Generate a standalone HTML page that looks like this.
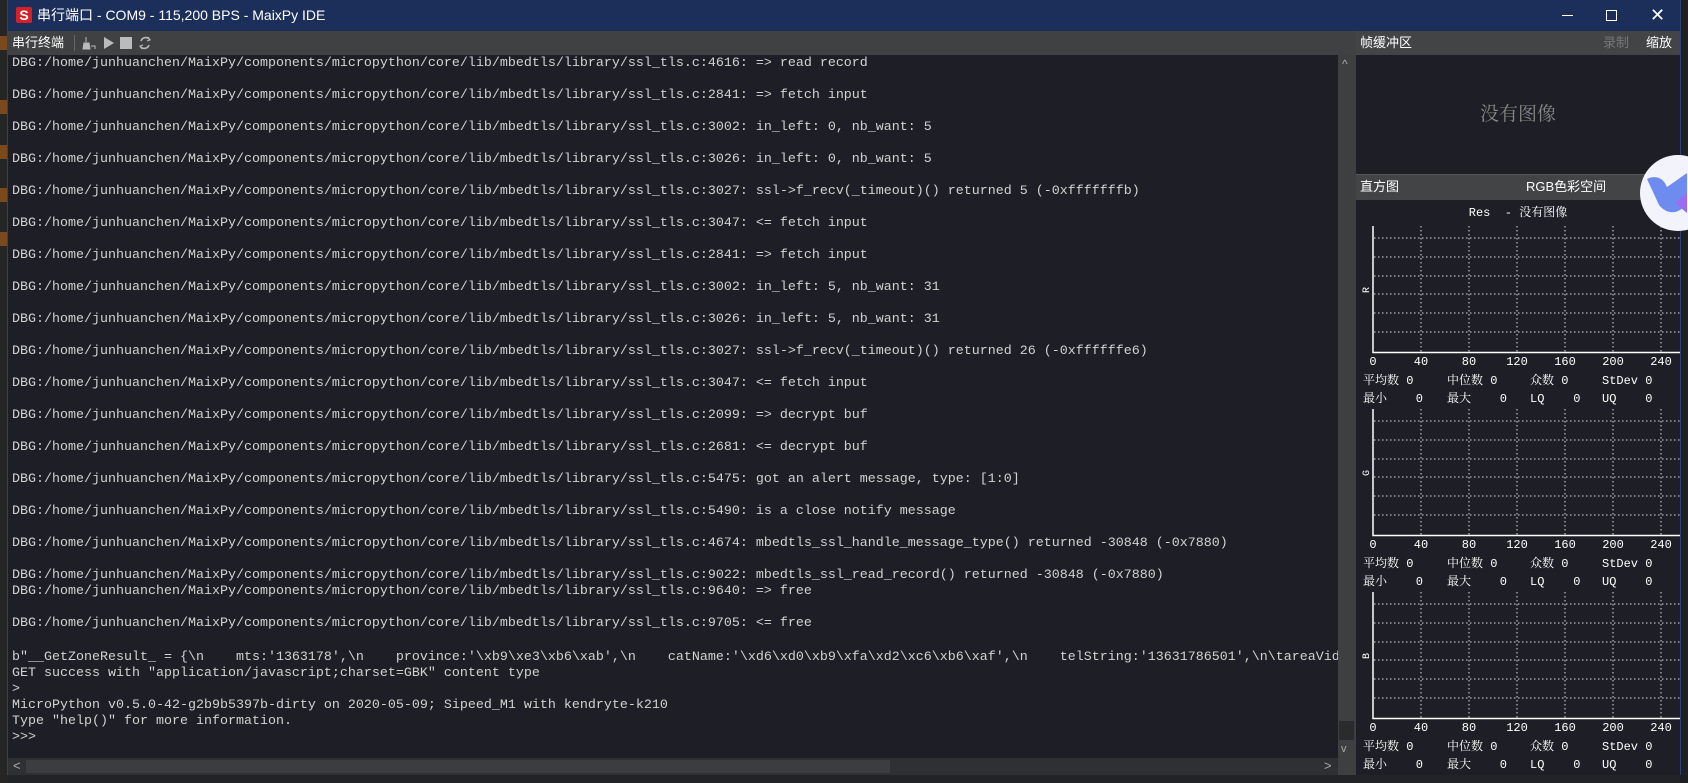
<!DOCTYPE html>
<html><head><meta charset="utf-8"><style>
*{margin:0;padding:0;box-sizing:border-box}
body{width:1688px;height:783px;background:#1b1c20;position:relative;overflow:hidden;font-family:"Liberation Sans","Noto Sans CJK SC",sans-serif}
.abs{position:absolute}
#title{left:8px;top:0;width:1672px;height:31px;background:#1b2f5a;color:#fff;font-size:14px}
#tb{left:8px;top:31px;width:1348px;height:24px;background:#404142;color:#fff;font-size:13px}
#term{left:8px;top:55px;width:1330px;height:703px;background:#1e1f26;overflow:hidden}
pre{font-family:"Liberation Mono",monospace;font-size:13.33px;line-height:16px;color:#d2d2d2;padding-left:4px;white-space:pre}
#vs{left:1338px;top:55px;width:18px;height:720px;background:#3e3f40}
#hs{left:8px;top:758px;width:1330px;height:17px;background:#2f3033}
#rp{left:1356px;top:31px;width:324px;height:744px;background:#1e1f26}
.hdr{background:#434445;color:#fff;font-size:13px;height:24px;line-height:24px}
.st{font-family:"Liberation Mono","Noto Serif CJK SC",monospace;font-size:12px;color:#fff;position:absolute}
</style></head><body>
<div class="abs" style="left:0;top:0;width:8px;height:783px;background:#252526"></div>
<div class="abs" style="left:0;top:36px;width:7px;height:14px;background:#7a4a1c"></div>
<div class="abs" style="left:0;top:100px;width:7px;height:14px;background:#7a4a1c"></div>
<div class="abs" style="left:0;top:145px;width:7px;height:14px;background:#7a4a1c"></div>
<div class="abs" style="left:0;top:188px;width:7px;height:14px;background:#7a4a1c"></div>
<div class="abs" style="left:0;top:232px;width:7px;height:14px;background:#7a4a1c"></div>
<div class="abs" style="left:1680px;top:0;width:8px;height:783px;background:#1e1f22"></div>

<div id="title" class="abs">
 <div class="abs" style="left:8px;top:7px;width:16px;height:16px;background:#d42027;border-radius:2px;color:#fff;font-weight:bold;font-size:14px;line-height:16px;text-align:center">S</div>
 <div class="abs" style="left:29px;top:7px;line-height:17px">串行端口 - COM9 - 115,200 BPS - MaixPy IDE</div>
 <div class="abs" style="left:1554px;top:15px;width:11px;height:1px;background:#fff"></div>
 <div class="abs" style="left:1598px;top:10px;width:11px;height:11px;border:1px solid #fff"></div>
 <div class="abs" style="left:1642px;top:4px;font-size:18px;line-height:22px">✕</div>
</div>

<div id="tb" class="abs">
 <div class="abs" style="left:4px;top:3px;line-height:18px">串行终端</div>
 <div class="abs" style="left:66px;top:4px;width:1px;height:16px;background:#666"></div>
 <svg class="abs" style="left:74px;top:4px" width="80" height="16">
  <path d="M4 2v5M2 8h5l1 6H1z" fill="#bbb" stroke="#bbb"/><path d="M9 11h4v3" stroke="#bbb" fill="none"/>
  <path d="M22 2l10 6-10 6z" fill="#bbb"/>
  <rect x="38" y="2" width="12" height="12" fill="#bbb"/>
  <path d="M68 5a5 5 0 0 0-9 1M58 11a5 5 0 0 0 9-1" stroke="#bbb" stroke-width="1.6" fill="none"/>
  <path d="M66 2l2 3-3 1M60 14l-2-3 3-1" stroke="#bbb" fill="none"/>
 </svg>
</div>

<div id="term" class="abs"><pre style="padding-top:1px">DBG:/home/junhuanchen/MaixPy/components/micropython/core/lib/mbedtls/library/ssl_tls.c:4616: =&gt; read record

DBG:/home/junhuanchen/MaixPy/components/micropython/core/lib/mbedtls/library/ssl_tls.c:2841: =&gt; fetch input

DBG:/home/junhuanchen/MaixPy/components/micropython/core/lib/mbedtls/library/ssl_tls.c:3002: in_left: 0, nb_want: 5

DBG:/home/junhuanchen/MaixPy/components/micropython/core/lib/mbedtls/library/ssl_tls.c:3026: in_left: 0, nb_want: 5

DBG:/home/junhuanchen/MaixPy/components/micropython/core/lib/mbedtls/library/ssl_tls.c:3027: ssl-&gt;f_recv(_timeout)() returned 5 (-0xfffffffb)

DBG:/home/junhuanchen/MaixPy/components/micropython/core/lib/mbedtls/library/ssl_tls.c:3047: &lt;= fetch input

DBG:/home/junhuanchen/MaixPy/components/micropython/core/lib/mbedtls/library/ssl_tls.c:2841: =&gt; fetch input

DBG:/home/junhuanchen/MaixPy/components/micropython/core/lib/mbedtls/library/ssl_tls.c:3002: in_left: 5, nb_want: 31

DBG:/home/junhuanchen/MaixPy/components/micropython/core/lib/mbedtls/library/ssl_tls.c:3026: in_left: 5, nb_want: 31

DBG:/home/junhuanchen/MaixPy/components/micropython/core/lib/mbedtls/library/ssl_tls.c:3027: ssl-&gt;f_recv(_timeout)() returned 26 (-0xffffffe6)

DBG:/home/junhuanchen/MaixPy/components/micropython/core/lib/mbedtls/library/ssl_tls.c:3047: &lt;= fetch input

DBG:/home/junhuanchen/MaixPy/components/micropython/core/lib/mbedtls/library/ssl_tls.c:2099: =&gt; decrypt buf

DBG:/home/junhuanchen/MaixPy/components/micropython/core/lib/mbedtls/library/ssl_tls.c:2681: &lt;= decrypt buf

DBG:/home/junhuanchen/MaixPy/components/micropython/core/lib/mbedtls/library/ssl_tls.c:5475: got an alert message, type: [1:0]

DBG:/home/junhuanchen/MaixPy/components/micropython/core/lib/mbedtls/library/ssl_tls.c:5490: is a close notify message

DBG:/home/junhuanchen/MaixPy/components/micropython/core/lib/mbedtls/library/ssl_tls.c:4674: mbedtls_ssl_handle_message_type() returned -30848 (-0x7880)

DBG:/home/junhuanchen/MaixPy/components/micropython/core/lib/mbedtls/library/ssl_tls.c:9022: mbedtls_ssl_read_record() returned -30848 (-0x7880)
DBG:/home/junhuanchen/MaixPy/components/micropython/core/lib/mbedtls/library/ssl_tls.c:9640: =&gt; free

DBG:/home/junhuanchen/MaixPy/components/micropython/core/lib/mbedtls/library/ssl_tls.c:9705: &lt;= free
</pre><pre style="margin-top:18px">b"__GetZoneResult_ = {\n    mts:'1363178',\n    province:'\xb9\xe3\xb6\xab',\n    catName:'\xd6\xd0\xb9\xfa\xd2\xc6\xb6\xaf',\n    telString:'13631786501',\n\tareaVid
GET success with "application/javascript;charset=GBK" content type
&gt;
MicroPython v0.5.0-42-g2b9b5397b-dirty on 2020-05-09; Sipeed_M1 with kendryte-k210
Type "help()" for more information.
&gt;&gt;&gt;</pre></div>

<div id="vs" class="abs">
 <div class="abs" style="left:4px;top:2px;color:#aaa;font-size:12px">^</div>
 <div class="abs" style="left:1px;top:666px;width:15px;height:19px;background:#2a2b2e"></div>
 <div class="abs" style="left:3px;top:688px;color:#aaa;font-size:11px">v</div>
</div>
<div id="hs" class="abs">
 <div class="abs" style="left:18px;top:2px;width:864px;height:13px;background:#3c3d3f"></div>
 <div class="abs" style="left:5px;top:0;color:#aaa;font-size:13px">&lt;</div>
 <div class="abs" style="left:1316px;top:0;color:#aaa;font-size:13px">&gt;</div>
</div>

<div id="rp" class="abs">
 <div class="hdr abs" style="left:0;top:0;width:324px">
  <span class="abs" style="left:4px">帧缓冲区</span>
  <span class="abs" style="left:247px;color:#777">录制</span>
  <span class="abs" style="left:290px">缩放</span>
 </div>
 <div class="abs" style="left:0;top:68px;width:324px;text-align:center;color:#888;font-size:19px;font-family:'Noto Serif CJK SC',serif">没有图像</div>
 <div class="abs" style="left:0;top:143px;width:324px;height:1px;background:#555"></div>
 <div class="hdr abs" style="left:0;top:144px;width:324px;height:25px">
  <span class="abs" style="left:4px">直方图</span>
  <span class="abs" style="left:170px">RGB色彩空间</span>
 </div>
 <div class="st" style="left:0;top:172px;width:324px;text-align:center">Res&nbsp; - 没有图像</div>
</div>

<svg class="abs" style="left:1356px;top:31px" width="324" height="744" font-family="Liberation Mono,Noto Serif CJK SC,monospace" font-size="12" fill="#fff">
<defs>
<g id="ch">
 <g stroke="#ddd" stroke-dasharray="1.5 2.5" stroke-width="1">
  <path d="M65 0v126M113 0v126M161 0v126M209 0v126M257 0v126M305 0v126"/>
  <path d="M18 12H324M18 31H324M18 50H324M18 68H324M18 87H324M18 106H324"/>
 </g>
 <path d="M17 0v126.5H324" stroke="#fff" stroke-width="1.5" fill="none"/>
 <g text-anchor="middle">
  <text x="17" y="139">0</text><text x="65" y="139">40</text><text x="113" y="139">80</text><text x="161" y="139">120</text><text x="209" y="139">160</text><text x="257" y="139">200</text><text x="305" y="139">240</text>
 </g>
 <text x="7" y="158">平均数 0</text><text x="91" y="158">中位数 0</text><text x="174" y="158">众数 0</text><text x="246" y="158">StDev 0</text>
 <text x="7" y="176">最小&#160;&#160;&#160; 0</text><text x="91" y="176">最大&#160;&#160;&#160; 0</text><text x="174" y="176">LQ&#160;&#160;&#160; 0</text><text x="246" y="176">UQ&#160;&#160;&#160; 0</text>
</g>
</defs>
<g transform="translate(0,195)"><use href="#ch"/><text x="0" y="0" transform="translate(13,67) rotate(-90)" font-size="10">R</text></g>
<g transform="translate(0,378)"><use href="#ch"/><text x="0" y="0" transform="translate(13,67) rotate(-90)" font-size="10">G</text></g>
<g transform="translate(0,561)"><use href="#ch"/><text x="0" y="0" transform="translate(13,67) rotate(-90)" font-size="10">B</text></g>
</svg>

<div class="abs" style="left:1680px;top:0;width:1px;height:775px;background:#2b4275"></div>
<div class="abs" style="left:7px;top:0;width:1px;height:775px;background:#2b4275"></div>
<div class="abs" style="left:1640px;top:155px;width:76px;height:76px;border-radius:50%;background:#f3f4fb"></div>
<svg class="abs" style="left:1645px;top:165px" width="43" height="60"><path d="M2 14c8-4 16-2 20 8l20-14v30c-8 12-20 12-28 2z" fill="#6e8cf0"/><path d="M30 38l12-10v20z" fill="#9b6cf0"/></svg>
<div class="abs" style="left:8px;top:775px;width:1672px;height:8px;background:#222326"></div>
</body></html>
